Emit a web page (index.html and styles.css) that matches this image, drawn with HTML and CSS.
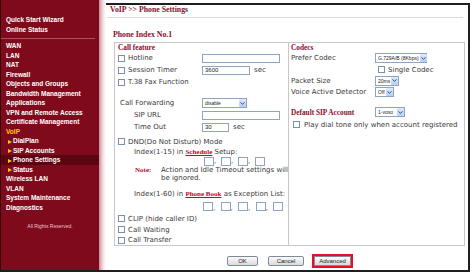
FILE: index.html
```html
<!DOCTYPE html>
<html lang="en">
<head>
  <meta charset="UTF-8">
  <title>VoIP Phone Settings</title>
  <link rel="stylesheet" href="styles.css">
</head>
<body>
<div class="page">
  <nav class="side">
    <div class="menu top">
      <a>Quick Start Wizard</a>
      <a>Online Status</a>
    </div>
    <div class="menu main-menu">
      <a>WAN</a>
      <a>LAN</a>
      <a>NAT</a>
      <a>Firewall</a>
      <a>Objects and Groups</a>
      <a>Bandwidth Management</a>
      <a>Applications</a>
      <a>VPN and Remote Access</a>
      <a>Certificate Management</a>
      <a class="on">VoIP</a>
      <a class="sub">DialPlan</a>
      <a class="sub">SIP Accounts</a>
      <a class="sub cur">Phone Settings</a>
      <a class="sub">Status</a>
      <a>Wireless LAN</a>
      <a>VLAN</a>
      <a>System Maintenance</a>
      <a>Diagnostics</a>
    </div>
    <p class="rights">All Rights Reserved.</p>
  </nav>
  <div class="edge"></div>

  <main class="content">
    <div class="crumb">VoIP &gt;&gt; Phone Settings</div>
    <div class="idx">Phone Index No.1</div>

    <div class="panel">
      <!-- Call feature -->
      <div class="col left">
        <div class="row head">Call feature</div>
        <div class="row">
          <label class="lbl"><span class="cb"></span>Hotline</label>
          <span class="txt long"></span>
        </div>
        <div class="row">
          <label class="lbl"><span class="cb"></span>Session Timer</label>
          <span class="txt mid">3600</span><span class="unit">sec</span>
        </div>
        <div class="row">
          <label class="lbl"><span class="cb"></span>T.38 Fax Function</label>
        </div>
        <div class="row gap9">
          <label class="lbl pad2">Call Forwarding</label>
          <span class="sel w45"><span class="val">disable</span><span class="arr"><svg width="5" height="3" viewBox="0 0 5 3"><path d="M0.5 0.3 L2.5 2.4 L4.5 0.3" fill="none" stroke="#2f4f93" stroke-width="1"/></svg></span></span>
        </div>
        <div class="row">
          <label class="lbl ind">SIP URL</label>
          <span class="txt long"></span>
        </div>
        <div class="row">
          <label class="lbl ind">Time Out</label>
          <span class="txt short">30</span><span class="unit">sec</span>
        </div>
        <div class="row gap3 h11">
          <label class="lbl wide"><span class="cb"></span>DND(Do Not Disturb) Mode</label>
        </div>
        <div class="row h9 ind">Index(1-15) in&nbsp;<a class="link">Schedule</a>&nbsp;Setup:</div>
        <div class="row h10 boxes first">
          <span class="box"></span><span class="sep">,</span><span class="box"></span><span class="sep">,</span><span class="box"></span><span class="sep">,</span><span class="box"></span>
        </div>
        <div class="row note">
          <b>Note:</b>
          <span>Action and Idle Timeout settings will<br>be ignored.</span>
        </div>
        <div class="row h10 gap7 ind">Index(1-60) in&nbsp;<a class="link">Phone Book</a>&nbsp;as Exception List:</div>
        <div class="row h14 boxes second">
          <span class="box"></span><span class="sep">,</span><span class="box"></span><span class="sep">,</span><span class="box"></span><span class="sep">,</span><span class="box"></span><span class="sep">,</span><span class="box"></span>
        </div>
        <div class="row h11"><label class="lbl wide"><span class="cb"></span>CLIP (hide caller ID)</label></div>
        <div class="row h11"><label class="lbl wide"><span class="cb"></span>Call Waiting</label></div>
        <div class="row h10"><label class="lbl wide"><span class="cb"></span>Call Transfer</label></div>
      </div>

      <!-- Codecs -->
      <div class="col right">
        <div class="row head">Codecs</div>
        <div class="row">
          <span class="lbl">Prefer Codec</span>
          <span class="sel w52"><span class="val">G.729A/B (8Kbps)</span><span class="arr"><svg width="5" height="3" viewBox="0 0 5 3"><path d="M0.5 0.3 L2.5 2.4 L4.5 0.3" fill="none" stroke="#2f4f93" stroke-width="1"/></svg></span></span>
        </div>
        <div class="row h11 single"><label><span class="cb"></span>Single Codec</label></div>
        <div class="row h11">
          <span class="lbl">Packet Size</span>
          <span class="sel w24"><span class="val">20ms</span><span class="arr"><svg width="5" height="3" viewBox="0 0 5 3"><path d="M0.5 0.3 L2.5 2.4 L4.5 0.3" fill="none" stroke="#2f4f93" stroke-width="1"/></svg></span></span>
        </div>
        <div class="row">
          <span class="lbl">Voice Active Detector</span>
          <span class="sel w19"><span class="val">Off</span><span class="arr"><svg width="5" height="3" viewBox="0 0 5 3"><path d="M0.5 0.3 L2.5 2.4 L4.5 0.3" fill="none" stroke="#2f4f93" stroke-width="1"/></svg></span></span>
        </div>
        <div class="row gap8">
          <span class="lbl head">Default SIP Account</span>
          <span class="sel w30"><span class="val">1-voso</span><span class="arr"><svg width="5" height="3" viewBox="0 0 5 3"><path d="M0.5 0.3 L2.5 2.4 L4.5 0.3" fill="none" stroke="#2f4f93" stroke-width="1"/></svg></span></span>
        </div>
        <div class="row h13 play"><label><span class="cb"></span>Play dial tone only when account registered</label></div>
      </div>
    </div>

    <div class="btns">
      <button class="btn ok">OK</button>
      <button class="btn cancel">Cancel</button>
      <span class="hl"><button class="btn adv">Advanced</button></span>
    </div>
  </main>
</div>
</body>
</html>
```

FILE: styles.css
```css
body { margin: 0; background: #fff; font-family: "DejaVu Sans", Verdana, sans-serif; font-size: 7px; color: #3a3a3a; }
.page { display: flex; width: 470px; height: 270px; border-bottom: 2px solid #1e1e1e; }

/* sidebar */
.side {
  width: 99px;
  box-sizing: border-box;
  padding-top: 15px;
  background: #7f0a1c;
  border-left: 1px solid #3a0008;
  font-family: "Liberation Sans", Arial, sans-serif;
  font-weight: bold;
  font-size: 6.5px;
  color: #fff;
}
.menu a { display: block; height: 9.5px; line-height: 9.5px; padding-left: 5px; color: #fff; text-decoration: none; white-space: nowrap; }
.menu.top { margin-right: 4px; padding-bottom: 4px; border-bottom: 1px solid #a8505c; }
.main-menu { padding-top: 2px; }
.menu a.on { color: #ffcc00; }
.menu a.sub { padding-left: 7px; }
.menu a.sub::before {
  content: "";
  display: inline-block;
  border-left: 4px solid #ffcc00;
  border-top: 2.5px solid transparent;
  border-bottom: 2.5px solid transparent;
  margin-right: 1px;
  vertical-align: -0.5px;
}
.menu a.cur { background: #5c0512; }
.rights { margin: 10px 0 0; text-align: center; font-weight: normal; font-size: 5px; line-height: 8px; color: #e8c6cb; }

.edge { width: 7px; background: linear-gradient(to right, #c98c97, #f3dde1 55%, #fff); }

/* content */
.content { flex: 1; margin-top: 3px; border-top: 2px solid #1e1e1e; border-right: 2px solid #1e1e1e; display: flex; flex-direction: column; }
.crumb, .idx, .head, .link, .note b {
  font-family: "Liberation Serif", "Times New Roman", serif;
  font-weight: bold;
  color: #8e0b2a;
}
.crumb { margin: 0 5px 0 1px; padding: 0 3px 3px; height: 9px; line-height: 9px; font-size: 7.8px; border-bottom: 1px solid #dadada; }
.idx { margin: 12px 0 2px 7px; height: 10px; line-height: 10px; font-size: 7.8px; }

.panel { display: flex; height: 204px; margin: 0 3px 0 8px; box-sizing: border-box; border: 1px solid #c8c8c8; overflow: hidden; }
.col.left { width: 174px; box-sizing: border-box; padding-left: 3px; border-right: 1px solid #c8c8c8; }
.col.right { flex: 1; padding-left: 2px; }

.row { display: flex; align-items: center; height: 12px; white-space: nowrap; }
.row.head { height: 9px; font-size: 7.3px; }
.h9 { height: 9px; }
.h10 { height: 10px; }
.h11 { height: 11px; }
.h13 { height: 13px; }
.h14 { height: 14px; }
.gap3 { margin-top: 3px; }
.gap7 { margin-top: 7px; }
.gap8 { margin-top: 8px; }
.gap9 { margin-top: 9px; }

.lbl { display: flex; align-items: center; width: 84px; flex: none; }
.lbl.wide { width: auto; }
.lbl.head { font-size: 7.3px; }
.pad2 { padding-left: 2px; box-sizing: border-box; }
.ind { padding-left: 16px; box-sizing: border-box; }
.row.ind { padding-left: 16px; }

.cb { display: inline-block; width: 7px; height: 7px; box-sizing: border-box; border: 1px solid #7d90a8; background: #fff; margin-right: 3px; flex: none; }

.txt { display: inline-block; height: 9px; box-sizing: border-box; border: 1px solid #8ea5c2; padding-left: 2px; font: 6px/7px "Liberation Sans", Arial, sans-serif; color: #222; }
.txt.long { width: 78px; }
.txt.mid { width: 48px; }
.txt.short { width: 27px; }
.unit { margin-left: 4px; }

.sel { display: inline-flex; align-items: center; height: 10px; box-sizing: border-box; border: 1px solid #8ea5c2; padding-left: 2px; background: #fff; font: 5px "Liberation Sans", Arial, sans-serif; color: #222; }
.sel .val { flex: 1; white-space: nowrap; }
.sel .arr { display: flex; align-items: center; justify-content: center; width: 7px; height: 8px; margin-left: 1px; flex: none; background: linear-gradient(#dce9fb, #b9cff0); border-radius: 1px; }
.w52 { width: 52px; }
.w45 { width: 45px; }
.w30 { width: 30px; }
.w24 { width: 24px; }
.w19 { width: 19px; }

.link { text-decoration: underline; color: #c4002c; font-size: 7px; }

.boxes.first { padding-left: 86px; }
.boxes.second { padding-left: 85px; }
.box { display: inline-block; width: 10px; height: 9px; box-sizing: border-box; border: 1px solid #8ea5c2; flex: none; }
.boxes.first .sep { width: 7px; }
.boxes.second .sep { width: 7.5px; }
.sep { display: inline-block; line-height: 9px; align-self: flex-end; }

.note { align-items: flex-start; height: 16px; line-height: 8px; padding-left: 17px; }
.note b { width: 26px; color: #c4002c; font-size: 7px; }

.single { padding-left: 87px; }
.single label, .play label { display: flex; align-items: center; }
.play { padding-left: 2px; }
.play .cb { margin-right: 4px; }

/* buttons */
.btns { display: flex; justify-content: center; align-items: center; height: 14px; margin-top: 8px; padding-left: 6px; }
.btn { height: 10px; box-sizing: border-box; padding: 0; border: 1px solid #7c8b9a; border-radius: 2px; background: linear-gradient(#fbfbfb, #dadada); font: 6px "Liberation Sans", Arial, sans-serif; color: #222; }
.btn.ok { width: 31px; margin-right: 10px; }
.btn.cancel { width: 36px; margin-right: 8px; }
.hl { display: inline-flex; border: 2px solid #e0102a; }
.btn.adv { width: 37px; border-radius: 0; }
```
